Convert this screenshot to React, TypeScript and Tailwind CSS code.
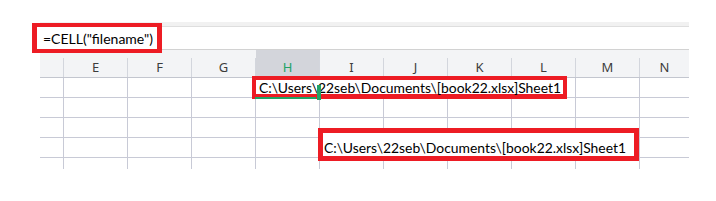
import React from "react";

const cols = ["E", "F", "G", "H", "I", "J", "K", "L", "M"];

const cellFont = { fontFamily: "Lato, 'Open Sans', sans-serif" };

function HeaderRow() {
  return (
    <div className="flex h-[28px] items-end bg-[#f3f4f6] border-b border-[#c3c6cf]">
      <div className="flex h-full w-[24px] items-end">
        <div className="flex-1" />
        <div className="h-[19px] w-px bg-[#d3d6dd]" />
      </div>
      {cols.map((c) => (
        <div
          key={c}
          className={
            "flex h-full w-[64px] items-end " + (c === "H" ? "bg-[#d3d5db]" : "")
          }
        >
          <div
            className={
              "flex h-[19px] flex-1 items-center justify-center text-[13px] " +
              (c === "H" ? "text-[#21a366]" : "text-[#3c3c3c]")
            }
          >
            {c}
          </div>
          <div className="h-[19px] w-px bg-[#d3d6dd]" />
        </div>
      ))}
      <div className="flex h-[19px] flex-1 items-center justify-center text-[13px] text-[#3c3c3c]">
        N
      </div>
    </div>
  );
}

function Row({
  textCol,
  text,
  last,
}: {
  textCol?: string;
  text?: string;
  last?: boolean;
}) {
  return (
    <div
      className={
        "flex " + (last ? "h-[11px]" : "h-[20px] border-b border-[#c8cad6]")
      }
    >
      <div className="w-[24px] border-r border-[#c8cad6]" />
      {cols.map((c) => (
        <div key={c} className="relative w-[64px] border-r border-[#c8cad6]">
          {textCol === c && text ? (
            <div
              className={
                "relative z-20 flex h-full items-center whitespace-nowrap text-[13.9px] leading-none text-black " +
                (c === "H" ? "pl-[3px]" : "pl-[4px]")
              }
              style={cellFont}
            >
              {text}
            </div>
          ) : null}
        </div>
      ))}
      <div className="flex-1" />
    </div>
  );
}

export default function App() {
  const path = "C:\\Users\\22seb\\Documents\\[book22.xlsx]Sheet1";
  return (
    <div
      className="relative h-[201px] w-[716px] overflow-hidden bg-white"
      style={{ fontFamily: "'Noto Sans', 'Open Sans', sans-serif" }}
    >
      <div className="pl-[40px] pt-[22px]">
        <div className="w-[649px]">
          <div className="h-[4px] bg-[#f1f1f1]" />
          <div className="h-px bg-[#dedede]" />
          <div
            className="relative z-20 flex h-[22px] items-center pl-[3px] text-[14px] text-black"
            style={cellFont}
          >
            =CELL("filename")
          </div>
          <div className="h-px bg-[#d2d2d2]" />
          <HeaderRow />
          <Row textCol="H" text={path} />
          <Row />
          <Row />
          <Row textCol="I" text={path} />
          <Row last />
        </div>
      </div>

      {/* annotation boxes */}
      <div className="absolute left-[32px] top-[23px] z-10 h-[30px] w-[130px] border-x-[5px] border-y-[4px] border-[#ed1c24] bg-white" />
      <div className="absolute left-[252px] top-[76px] z-10 h-[23px] w-[315px] border-[4px] border-b-[5px] border-[#ed1c24] bg-white" />
      <div className="absolute left-[318px] top-[128px] z-10 h-[33px] w-[321px] border-[5px] border-[#ed1c24] bg-white" />

      {/* selection marks */}
      <div className="absolute left-[255px] top-[97px] z-30 h-[2px] w-[61px] bg-[#21a366]" />
      <div className="absolute left-[317px] top-[85px] z-30 h-[15px] w-[4px] bg-[#21a366]" />
    </div>
  );
}
